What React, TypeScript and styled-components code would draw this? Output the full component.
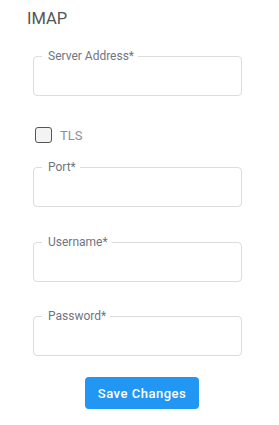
import styled, { createGlobalStyle } from "styled-components";

const GlobalStyle = createGlobalStyle`
  body {
    margin: 0;
    background: #fff;
    font-family: Roboto, "Liberation Sans", Arial, sans-serif;
  }
`;

const Page = styled.div`
  display: flex;
  flex-direction: column;
  padding: 7px 37px 16px 26px;
`;

const Title = styled.h2`
  margin: 0;
  font-size: 16.5px;
  line-height: 24px;
  font-weight: 400;
  color: #555;
  padding-left: 1px;
`;

const Field = styled.div<{ $gap: number }>`
  position: relative;
  margin: ${({ $gap }) => $gap}px 0 0 7px;
`;

const Input = styled.input`
  display: block;
  box-sizing: border-box;
  width: 209px;
  height: 40px;
  margin: 0;
  padding: 0 12px;
  border: 1px solid #dcdcdc;
  border-radius: 4px;
  background: #fff;
  font: inherit;
  font-size: 13px;
  outline: none;
`;

const Label = styled.label`
  position: absolute;
  top: -7px;
  left: 9px;
  padding: 0 4px 0 6px;
  background: #fff;
  font-size: 12px;
  line-height: 14px;
  color: #70757f;
`;

const CheckRow = styled.label<{ $gap: number }>`
  display: flex;
  align-items: center;
  gap: 8px;
  height: 16px;
  margin: ${({ $gap }) => $gap}px 0 0 9px;
  font-size: 13px;
  color: #8a8f98;
`;

const Box = styled.span`
  box-sizing: border-box;
  width: 17px;
  height: 16px;
  border: 1.5px solid #555;
  border-radius: 3px;
  background: #f3f3f3;
`;

const SaveButton = styled.button<{ $gap: number }>`
  align-self: flex-start;
  margin: ${({ $gap }) => $gap}px 0 0 59px;
  width: 114px;
  height: 32px;
  border: none;
  border-radius: 4px;
  background: #2196f3;
  color: #fff;
  font-family: inherit;
  font-size: 13px;
  font-weight: 500;
  letter-spacing: 0.5px;
  cursor: pointer;
`;

const FIELDS = [
  { label: "Port*", gap: 24 },
  { label: "Username*", gap: 35 },
  { label: "Password*", gap: 34, type: "password" },
];

export default function App() {
  return (
    <>
      <GlobalStyle />
      <Page>
        <Title>IMAP</Title>
        <Field $gap={25}>
          <Label>Server Address*</Label>
          <Input />
        </Field>
        <CheckRow $gap={31}>
          <Box />
          TLS
        </CheckRow>
        {FIELDS.map((f) => (
          <Field key={f.label} $gap={f.gap}>
            <Label>{f.label}</Label>
            <Input type={f.type} />
          </Field>
        ))}
        <SaveButton $gap={21}>Save Changes</SaveButton>
      </Page>
    </>
  );
}
